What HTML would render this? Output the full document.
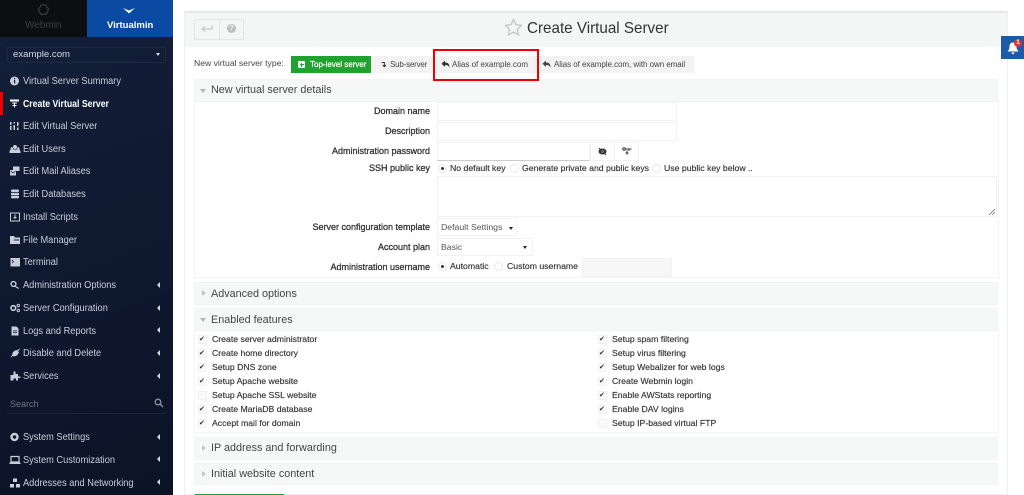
<!DOCTYPE html>
<html><head><meta charset="utf-8"><title>Create Virtual Server</title>
<style>
html,body{margin:0;padding:0;width:1024px;height:495px;overflow:hidden;background:#fff;font-family:"Liberation Sans",sans-serif}
#w{position:relative;width:1024px;height:495px;overflow:hidden}
.a,.t,.m,.l,.c,.box,svg.i{position:absolute}
.t,.m,.l,.c{white-space:nowrap}
#side{position:absolute;left:0;top:0;width:173px;height:495px;background:linear-gradient(160deg,#141f3a 0%,#0f1930 50%,#0b1326 100%)}
.m{left:23px;font-size:10px;line-height:12px;color:#c9ced8;margin-top:1px;transform:scaleX(.925);transform-origin:0 0}
.arr{position:absolute;left:157px;width:0;height:0;border:3px solid transparent;border-left:0;border-right:3.5px solid #d5d8de}
svg.i{left:9px;width:12px;height:12px;fill:#c9ced8}
.l{font-size:9px;line-height:11px;font-weight:normal;color:#333;-webkit-text-stroke:.3px #333;text-align:right;right:594px;margin-top:1px}
.c{font-size:8.7px;line-height:11px;color:#333;font-weight:normal;-webkit-text-stroke:.15px #333}
.sec{position:absolute;left:194px;width:804px;background:#f6f7f7;border:1px solid #f2f3f3;box-sizing:border-box}
.sec span{position:absolute;left:16px;top:5px;font-size:10.8px;line-height:13px;color:#444;white-space:nowrap}
.tri{position:absolute;width:0;height:0}
.box{width:9px;height:9px;background:#fafafa;border:1px solid #f0f0f0;box-sizing:border-box;border-radius:1px;margin-top:1px}
.chk{position:absolute;left:0;top:0;font-size:7px;line-height:7px;color:#333;font-family:"DejaVu Sans",sans-serif}
.inp{position:absolute;background:#fff;border:1px solid #f2f2f2;box-sizing:border-box}
.rad{position:absolute;width:9px;height:9px;border-radius:50%;border:1px solid #e8e8e8;box-sizing:border-box;background:#fff}
.rad.on:after{content:"";position:absolute;left:2px;top:2px;width:3px;height:3px;border-radius:50%;background:#333}
.btn{position:absolute;top:56px;height:17px;background:#f3f3f3;font-size:8px;line-height:17px;color:#444;white-space:nowrap}
</style></head><body><div id="w">
<div id="side">
<div class="a" style="left:0;top:0;width:87px;height:37px;background:#0c0e12"></div>
<div class="a" style="left:87px;top:0;width:86px;height:37px;background:#0a4aa3"></div>
<svg class="a" style="left:37px;top:4px;width:13px;height:12px" viewBox="0 0 13 13"><path d="M4 1h5l1 2.500 2 1.500-1 3-1.500 3h-6L2 8 1 5l2-1.500z" fill="none" stroke="#33363b" stroke-width="1.500"/></svg>
<div class="t" style="left:25px;top:20px;font-size:10px;line-height:12px;color:#3a3d42">Webmin</div>
<svg class="a" style="left:122px;top:7px;width:14px;height:7px" viewBox="0 0 14 7"><path d="M1 1l6 2.500L13 1 7 6.500z" fill="#fff"/></svg>
<div class="t" style="left:107px;top:20px;font-size:9.500px;line-height:12px;font-weight:bold;color:#fff">Virtualmin</div>
<div class="a" style="left:7px;top:47px;width:159px;height:16px;border:1px solid #1e2a45;box-sizing:border-box"></div>
<div class="t" style="left:13px;top:49px;font-size:9.600px;line-height:12px;color:#d5d8e0">example.com</div>
<div class="a" style="left:156px;top:53px;width:0;height:0;border:2.500px solid transparent;border-top:3.500px solid #d5d8de;border-bottom:0"></div>
<div class="a" style="left:0;top:92px;width:3px;height:23px;background:#f00000"></div>

<svg class="i" style="top:75px" viewBox="0 0 12 12"><circle cx="5.500" cy="6" r="4.500"/><rect x="5" y="5" width="1.200" height="3.500" fill="#141f3a"/><rect x="5" y="3" width="1.200" height="1.200" fill="#141f3a"/></svg>
<div class="m" style="top:75px">Virtual Server Summary</div>
<svg class="i" style="top:98px" viewBox="0 0 12 12"><rect x="1" y="1.500" width="9" height="2" fill="#fff"/><rect x="3" y="4.500" width="5" height="1" fill="#fff"/><rect x="5" y="5.500" width="1" height="4" fill="#fff"/><rect x="3.500" y="7" width="4" height="1" fill="#fff"/></svg>
<div class="m" style="top:98px;color:#fff;font-weight:bold;transform:scaleX(.87)">Create Virtual Server</div>
<svg class="i" style="top:120px" viewBox="0 0 12 12"><path d="M1 2h1.500v3H1zM1 6h1.500v4H1zM4.500 2H6v1.500H4.500zM4.500 5H6v5H4.500zM8 2h1.500v4H8zM8 7.500h1.500V10H8z"/></svg>
<div class="m" style="top:120px">Edit Virtual Server</div>
<svg class="i" style="top:143px" viewBox="0 0 12 12"><circle cx="6" cy="4" r="2"/><circle cx="2.800" cy="5.500" r="1.300"/><circle cx="9.200" cy="5.500" r="1.300"/><path d="M.5 9c0-2 1-2.500 2-2.500h6.500c1.500 0 2.500.5 2.500 2.500v1h-11z"/></svg>
<div class="m" style="top:143px">Edit Users</div>
<svg class="i" style="top:165px" viewBox="0 0 12 12"><path d="M4 1.500h6.500V6H4z"/><path d="M1 5h6v5.500H1z"/><path d="M1.500 6l2.500 2 2.500-2" stroke="#141f3a" fill="none" stroke-width=".7"/></svg>
<div class="m" style="top:165px">Edit Mail Aliases</div>
<svg class="i" style="top:188px" viewBox="0 0 12 12"><rect x="2" y="1.500" width="8" height="2.500" rx="1"/><rect x="2" y="4.700" width="8" height="2.500" rx=".6"/><rect x="2" y="7.900" width="8" height="2.500" rx="1"/></svg>
<div class="m" style="top:188px">Edit Databases</div>
<svg class="i" style="top:211px" viewBox="0 0 12 12"><rect x="1.500" y="2" width="9" height="8" fill="none" stroke="#c9ced8"/><path d="M5.500 3.500h1V6H8L6 8 4 6h1.500z"/></svg>
<div class="m" style="top:211px">Install Scripts</div>
<svg class="i" style="top:234px" viewBox="0 0 12 12"><path d="M1 2h4l1 1.500h5V10H1z"/><rect x="5" y="5.500" width="5" height="1" fill="#141f3a"/></svg>
<div class="m" style="top:234px">File Manager</div>
<svg class="i" style="top:256px" viewBox="0 0 12 12"><path d="M1.500 2h9.500v8.500H1.500z"/><path d="M3 4l1.500 1.500L3 7" stroke="#141f3a" fill="none" stroke-width=".8"/></svg>
<div class="m" style="top:256px">Terminal</div>
<svg class="i" style="top:279px" viewBox="0 0 12 12"><circle cx="4.500" cy="5" r="2.400" fill="none" stroke="#c9ced8" stroke-width="1.400"/><path d="M6 6.500l4 2.500-.6 1L5.500 7.500z"/></svg>
<div class="m" style="top:279px">Administration Options</div><div class="arr" style="top:282px"></div>
<svg class="i" style="top:302px" viewBox="0 0 12 12"><circle cx="4.300" cy="6" r="2.300" fill="none" stroke="#c9ced8" stroke-width="1.600"/><circle cx="9.300" cy="3.500" r="1.200" fill="none" stroke="#c9ced8"/><circle cx="9.300" cy="8.500" r="1.200" fill="none" stroke="#c9ced8"/></svg>
<div class="m" style="top:302px">Server Configuration</div><div class="arr" style="top:305px"></div>
<svg class="i" style="top:325px" viewBox="0 0 12 12"><path d="M2.500 1.500h5l2 2v7h-7z"/><rect x="4" y="5.500" width="4" height=".8" fill="#141f3a"/><rect x="4" y="7.300" width="4" height=".8" fill="#141f3a"/></svg>
<div class="m" style="top:325px">Logs and Reports</div><div class="arr" style="top:327px"></div>
<svg class="i" style="top:347px" viewBox="0 0 12 12"><path d="M1 11l2-3 1-3 3-2 1 .5 2.500-2 .5.500-2 2.500 1 1-2 3-3 1-1.500-.5z"/></svg>
<div class="m" style="top:347px">Disable and Delete</div><div class="arr" style="top:350px"></div>
<svg class="i" style="top:370px" viewBox="0 0 12 12"><path d="M4.500 1.500h2V4H9v2.500h2.500v1.500H9V10.500H7V8.500H4.500v2h-3V5h3z"/></svg>
<div class="m" style="top:370px">Services</div><div class="arr" style="top:373px"></div>
<div class="t" style="left:10px;top:398px;font-size:9px;line-height:12px;color:#6d7484">Search</div>
<svg class="a" style="left:154px;top:398px;width:10px;height:10px" viewBox="0 0 10 10"><circle cx="4" cy="4" r="2.800" fill="none" stroke="#8a909c" stroke-width="1.300"/><path d="M6 6l3 3" stroke="#8a909c" stroke-width="1.500"/></svg>
<div class="a" style="left:7px;top:413px;width:159px;height:1px;background:#18233a"></div>
<svg class="i" style="top:431px" viewBox="0 0 12 12"><circle cx="5.500" cy="6" r="3"  fill="none" stroke="#c9ced8" stroke-width="2.400"/></svg>
<div class="m" style="top:431px">System Settings</div><div class="arr" style="top:434px"></div>
<svg class="i" style="top:454px" viewBox="0 0 12 12"><path d="M2 2.500h8V8H2z" fill="none" stroke="#c9ced8" stroke-width="1.200"/><rect x=".5" y="8.500" width="11" height="1.500"/></svg>
<div class="m" style="top:454px">System Customization</div><div class="arr" style="top:456px"></div>
<svg class="i" style="top:477px" viewBox="0 0 12 12"><rect x="4" y="1.500" width="4" height="3.500"/><rect x="1" y="7" width="4" height="3.500"/><rect x="7" y="7" width="4" height="3.500"/></svg>
<div class="m" style="top:477px">Addresses and Networking</div><div class="arr" style="top:479px"></div>
</div>

<div class="a" style="left:184px;top:11px;width:824px;height:484px;border:1px solid #eeeeee;border-top:2px solid #e9e9e9;box-sizing:border-box;background:#fff"></div>
<div class="a" style="left:185px;top:13px;width:822px;height:34px;background:#f4f5f5"></div>
<div class="a" style="left:194px;top:19px;width:50px;height:21px;border:1px solid #e4e6e6;box-sizing:border-box"></div>
<div class="a" style="left:219px;top:19px;width:1px;height:21px;background:#e4e6e6"></div>
<svg class="a" style="left:200px;top:23px;width:13px;height:11px" viewBox="0 0 13 11"><path d="M12 2v4H2M2 6l3-2.500M2 6l3 2.500" fill="none" stroke="#bdbfbf" stroke-width="1"/></svg>
<div class="a" style="left:227px;top:24px;width:9px;height:9px;border-radius:50%;background:#bdbfbf;color:#f4f5f5;font-size:7px;line-height:9px;text-align:center;font-weight:bold">?</div>
<svg class="a" style="left:504px;top:18px;width:19px;height:18px" viewBox="0 0 19 18"><path d="M9.500 1.500l2.400 5.200 5.600.7-4.100 3.900 1.100 5.600-5-2.800-5 2.800 1.100-5.600L1.500 7.400l5.600-.7z" fill="none" stroke="#c4c6c6" stroke-width="1.300"/></svg>
<div class="t" style="left:527px;top:19px;font-size:16px;line-height:19px;color:#333;transform:scaleX(.95);transform-origin:0 0">Create Virtual Server</div>

<div class="a" style="left:1001px;top:36px;width:23px;height:23px;background:#1d5ba8"></div>
<svg class="a" style="left:1006px;top:41px;width:15px;height:14px" viewBox="0 0 15 14"><path d="M7 1.500c3 0 3.500 2.500 3.500 4.500s1 3 2 4.500H1.500c1-1.500 2-2.500 2-4.500S4 1.500 7 1.500zM5.500 11.500h3c0 1-.7 1.800-1.500 1.800s-1.500-.8-1.500-1.800z" fill="#fff"/></svg>
<div class="a" style="left:1014px;top:39px;width:8px;height:8px;border-radius:50%;background:#d9363a;color:#fff;font-size:6px;line-height:8px;text-align:center;font-weight:bold">1</div>

<div class="t" style="left:194px;top:58px;font-size:8.600px;line-height:11px;color:#444">New virtual server type:</div>
<div class="btn" style="left:291px;width:80px;background:#1fa22e;color:#fff;-webkit-text-stroke:.2px #fff"><span class="a" style="left:7px;top:5px;width:7px;height:7px;background:#fff;border-radius:1px"></span><span class="a" style="left:8.500px;top:8px;width:4px;height:1px;background:#1fa22e"></span><span class="a" style="left:10px;top:6.500px;width:1px;height:4px;background:#1fa22e"></span><span class="a" style="left:19px;top:0">Top-level server</span></div>
<div class="btn" style="left:371px;width:62px"><span class="a" style="left:9px;top:0;font-weight:bold;color:#333">↴</span><span class="a" style="left:19px;top:0;letter-spacing:-.2px">Sub-server</span></div>
<div class="btn" style="left:433px;width:105px"><span class="a" style="left:19px;top:0">Alias of example.com</span></div>
<div class="btn" style="left:538px;width:156px"><span class="a" style="left:16px;top:0;letter-spacing:-.05px">Alias of example.com, with own email</span></div>
<svg class="a" style="left:441px;top:60px;width:9px;height:8px" viewBox="0 0 9 8"><path d="M4 .5v2c3 0 4.500 1.500 4.500 5C7.500 5.500 6 5 4 5v2L.5 3.700z" fill="#333"/></svg>
<svg class="a" style="left:542px;top:60px;width:9px;height:8px" viewBox="0 0 9 8"><path d="M4 .5v2c3 0 4.500 1.500 4.500 5C7.500 5.500 6 5 4 5v2L.5 3.700z" fill="#444"/></svg>
<div class="a" style="left:433px;top:49px;width:106px;height:32px;border:2px solid #f00000;box-sizing:border-box;z-index:5"></div>

<div class="a" style="left:194px;top:101px;width:805px;height:177px;border:1px solid #f3f4f4;box-sizing:border-box"></div>
<div class="sec" style="top:79px;height:23px"><span style="top:4px">New virtual server details</span><div class="tri" style="left:5px;top:9px;border:3.500px solid transparent;border-top:4px solid #b5b7b7;border-bottom:0"></div></div>

<div class="l" style="top:105px">Domain name</div>
<div class="inp" style="left:437px;top:102px;width:240px;height:19px"></div>
<div class="l" style="top:125px">Description</div>
<div class="inp" style="left:437px;top:122px;width:240px;height:19px"></div>
<div class="l" style="top:145px">Administration password</div>
<div class="inp" style="left:437px;top:142px;width:153px;height:19px;border-bottom:1px solid #ccc"></div>
<div class="inp" style="left:590px;top:142px;width:25px;height:19px"></div>
<div class="inp" style="left:614px;top:142px;width:25px;height:19px"></div>
<svg class="a" style="left:598px;top:147px;width:9px;height:9px" viewBox="0 0 9 9"><ellipse cx="4.500" cy="4.500" rx="4" ry="3" fill="#333"/><circle cx="4.500" cy="4.500" r="1.200" fill="#fff"/><path d="M1 1l7 7" stroke="#333"/></svg>
<svg class="a" style="left:622px;top:147px;width:10px;height:9px" viewBox="0 0 10 9"><circle cx="2" cy="2" r="1.300" fill="none" stroke="#333"/><path d="M3 2h6.500M7 2v2M5 3.500v4M3.500 6h3" stroke="#333" fill="none"/></svg>
<div class="l" style="top:162px">SSH public key</div>
<div class="rad on" style="left:438px;top:164px"></div><div class="c" style="left:450px;top:163px">No default key</div>
<div class="rad" style="left:510px;top:164px"></div><div class="c" style="left:522px;top:163px">Generate private and public keys</div>
<div class="rad" style="left:652px;top:164px"></div><div class="c" style="left:664px;top:163px">Use public key below ..</div>
<div class="inp" style="left:437px;top:176px;width:560px;height:41px"></div>
<svg class="a" style="left:989px;top:209px;width:6px;height:6px" viewBox="0 0 6 6"><path d="M6 0L0 6M6 3L3 6" stroke="#777" stroke-width=".8"/></svg>
<div class="l" style="top:221px">Server configuration template</div>
<div class="inp" style="left:437px;top:218px;width:80px;height:18px"></div>
<div class="c" style="left:441px;top:222px;color:#555;-webkit-text-stroke:0">Default Settings</div>
<div class="a" style="left:509px;top:227px;border:2.500px solid transparent;border-top:3.500px solid #222;border-bottom:0"></div>
<div class="l" style="top:241px">Account plan</div>
<div class="inp" style="left:437px;top:238px;width:96px;height:18px"></div>
<div class="c" style="left:441px;top:242px;color:#555;-webkit-text-stroke:0">Basic</div>
<div class="a" style="left:523px;top:246px;border:2.500px solid transparent;border-top:3.500px solid #222;border-bottom:0"></div>
<div class="l" style="top:261px">Administration username</div>
<div class="rad on" style="left:438px;top:262px"></div><div class="c" style="left:450px;top:261px">Automatic</div>
<div class="rad" style="left:494px;top:262px"></div><div class="c" style="left:507px;top:261px">Custom username</div>
<div class="a" style="left:582px;top:258px;width:90px;height:19px;background:#f7f7f7;border:1px solid #f1f1f1;box-sizing:border-box"></div>

<div class="sec" style="top:282px;height:23px"><span>Advanced options</span><div class="tri" style="left:7px;top:7px;border:3.500px solid transparent;border-left:4px solid #c5c7c7;border-right:0"></div></div>

<div class="a" style="left:194px;top:330px;width:805px;height:103px;border:1px solid #f3f4f4;box-sizing:border-box"></div>
<div class="sec" style="top:308px;height:23px"><span>Enabled features</span><div class="tri" style="left:5px;top:9px;border:3.500px solid transparent;border-top:4px solid #b5b7b7;border-bottom:0"></div></div>

<div class="box" style="left:198px;top:334px"><span class="chk">✔</span></div><div class="c" style="left:212px;top:334px">Create server administrator</div>
<div class="box" style="left:198px;top:348px"><span class="chk">✔</span></div><div class="c" style="left:212px;top:348px">Create home directory</div>
<div class="box" style="left:198px;top:362px"><span class="chk">✔</span></div><div class="c" style="left:212px;top:362px">Setup DNS zone</div>
<div class="box" style="left:198px;top:376px"><span class="chk">✔</span></div><div class="c" style="left:212px;top:376px">Setup Apache website</div>
<div class="box" style="left:198px;top:390px"></div><div class="c" style="left:212px;top:390px">Setup Apache SSL website</div>
<div class="box" style="left:198px;top:404px"><span class="chk">✔</span></div><div class="c" style="left:212px;top:404px">Create MariaDB database</div>
<div class="box" style="left:198px;top:418px"><span class="chk">✔</span></div><div class="c" style="left:212px;top:418px">Accept mail for domain</div>

<div class="box" style="left:598px;top:334px"><span class="chk">✔</span></div><div class="c" style="left:612px;top:334px">Setup spam filtering</div>
<div class="box" style="left:598px;top:348px"><span class="chk">✔</span></div><div class="c" style="left:612px;top:348px">Setup virus filtering</div>
<div class="box" style="left:598px;top:362px"><span class="chk">✔</span></div><div class="c" style="left:612px;top:362px">Setup Webalizer for web logs</div>
<div class="box" style="left:598px;top:376px"><span class="chk">✔</span></div><div class="c" style="left:612px;top:376px">Create Webmin login</div>
<div class="box" style="left:598px;top:390px"><span class="chk">✔</span></div><div class="c" style="left:612px;top:390px">Enable AWStats reporting</div>
<div class="box" style="left:598px;top:404px"><span class="chk">✔</span></div><div class="c" style="left:612px;top:404px">Enable DAV logins</div>
<div class="box" style="left:598px;top:418px"></div><div class="c" style="left:612px;top:418px">Setup IP-based virtual FTP</div>

<div class="sec" style="top:437px;height:23px"><span style="top:4px">IP address and forwarding</span><div class="tri" style="left:7px;top:7px;border:3.500px solid transparent;border-left:4px solid #c5c7c7;border-right:0"></div></div>
<div class="sec" style="top:463px;height:22px"><span style="top:4px">Initial website content</span><div class="tri" style="left:7px;top:7px;border:3.500px solid transparent;border-left:4px solid #c5c7c7;border-right:0"></div></div>
<div class="a" style="left:195px;top:494px;width:89px;height:1px;background:#1fa22e"></div>
</div></body></html>
